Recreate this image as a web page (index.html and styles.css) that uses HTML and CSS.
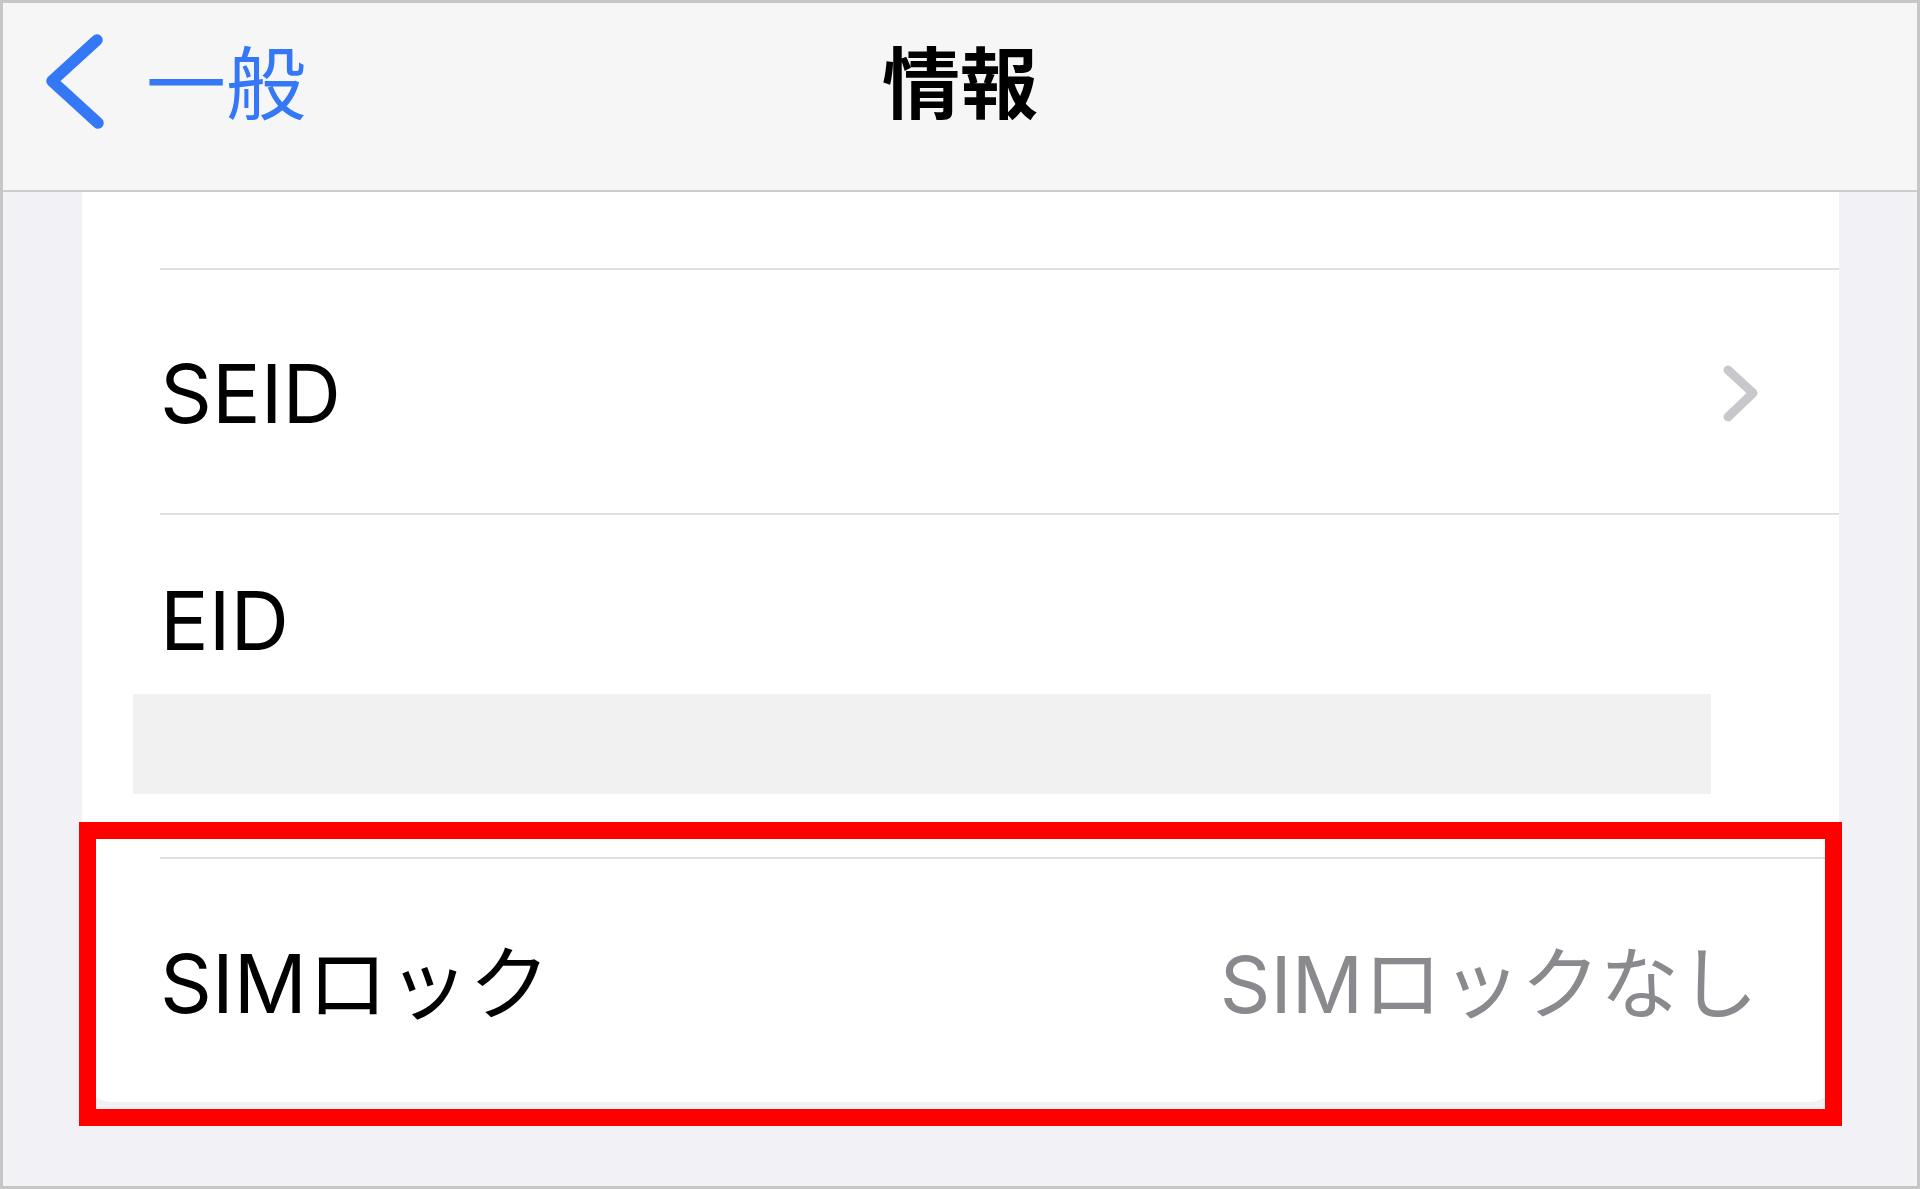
FILE: index.html
```html
<!DOCTYPE html>
<html lang="ja">
<head>
<meta charset="utf-8">
<title>情報</title>
<link rel="stylesheet" href="styles.css">
</head>
<body>
<div class="frame">
  <header class="nav">
    <div class="back">
      <svg class="back-chevron" width="60" height="100" viewBox="0 0 60 100" aria-hidden="true">
        <path d="M52 9 L7 50 L53 92" fill="none" stroke="#3478f6" stroke-width="11.5" stroke-linecap="round" stroke-linejoin="round"/>
      </svg>
      <span class="back-label">一般</span>
    </div>
    <h1 class="title">情報</h1>
    <div class="spacer"></div>
  </header>
  <main class="content">
    <section class="card">
      <div class="top-space"></div>
      <div class="sep"></div>
      <div class="row row-seid">
        <span class="label">SEID</span>
        <svg class="chevron" width="36" height="60" viewBox="0 0 36 60" aria-hidden="true">
          <path d="M6 6 L31 29 L6 53" fill="none" stroke="#c7c7cc" stroke-width="9" stroke-linecap="round" stroke-linejoin="round"/>
        </svg>
      </div>
      <div class="sep"></div>
      <div class="eid">
        <span class="label">EID</span>
        <div class="redacted"></div>
      </div>
      <div class="sep"></div>
      <div class="row row-sim">
        <span class="label">SIMロック</span>
        <span class="value">SIMロックなし</span>
      </div>
      <div class="highlight"></div>
    </section>
  </main>
</div>
</body>
</html>
```
FILE: styles.css
```css
* { box-sizing: border-box; }
html, body { margin: 0; padding: 0; }
body {
  background: #ffffff;
  font-family: "Inter", "Noto Sans CJK JP", sans-serif;
}
.frame {
  width: 1920px;
  height: 1189px;
  border: 3px solid #c6c6c6;
  background: #f1f1f6;
  display: flex;
  flex-direction: column;
}
.nav {
  height: 189px;
  flex: none;
  background: #f6f6f6;
  border-bottom: 2px solid #cdcdcd;
  display: grid;
  grid-template-columns: 1fr auto 1fr;
  align-items: start;
  padding-top: 35px;
}
.back {
  display: flex;
  align-items: flex-start;
  padding-left: 42px;
}
.back-chevron {
  margin-top: -7px;
  flex: none;
}
.back-label {
  margin-left: 41px;
  font-family: "Noto Sans CJK JP", sans-serif;
  font-size: 80px;
  line-height: 80px;
  color: #3478f6;
  font-weight: 400;
}
.title {
  margin: 0;
  padding-top: 1px;
  font-family: "Noto Sans CJK JP", sans-serif;
  font-size: 78px;
  line-height: 80px;
  font-weight: 700;
  color: #000;
}
.content {
  flex: 1;
  padding: 0 78px 0 79px;
}
.card {
  position: relative;
  background: #ffffff;
  border-radius: 0 0 30px 30px;
}
.top-space { height: 76px; }
.sep {
  height: 2px;
  margin-left: 78px;
  background: #e0e0e0;
}
.label, .value {
  font-size: 81px;
  line-height: 82px;
  color: #000;
  white-space: nowrap;
}
.value { color: #8a8a8e; font-size: 79px; }
.row {
  display: flex;
  align-items: center;
  justify-content: space-between;
  padding-left: 78px;
  padding-right: 81px;
}
.row-seid { padding-top: 83px; padding-bottom: 78px; }
.row-sim { padding-top: 84px; padding-bottom: 77px; }
.chevron { flex: none; }
.eid {
  padding-top: 65px;
  padding-bottom: 63px;
  display: flex;
  flex-direction: column;
}
.eid .label { padding-left: 78px; }
.redacted {
  margin-top: 32px;
  margin-left: 51px;
  width: 1578px;
  height: 100px;
  background: #f1f1f1;
}
.highlight {
  position: absolute;
  left: -3px;
  right: -3px;
  top: 630px;
  height: 304px;
  border: 17px solid #ff0000;
  pointer-events: none;
}
```
